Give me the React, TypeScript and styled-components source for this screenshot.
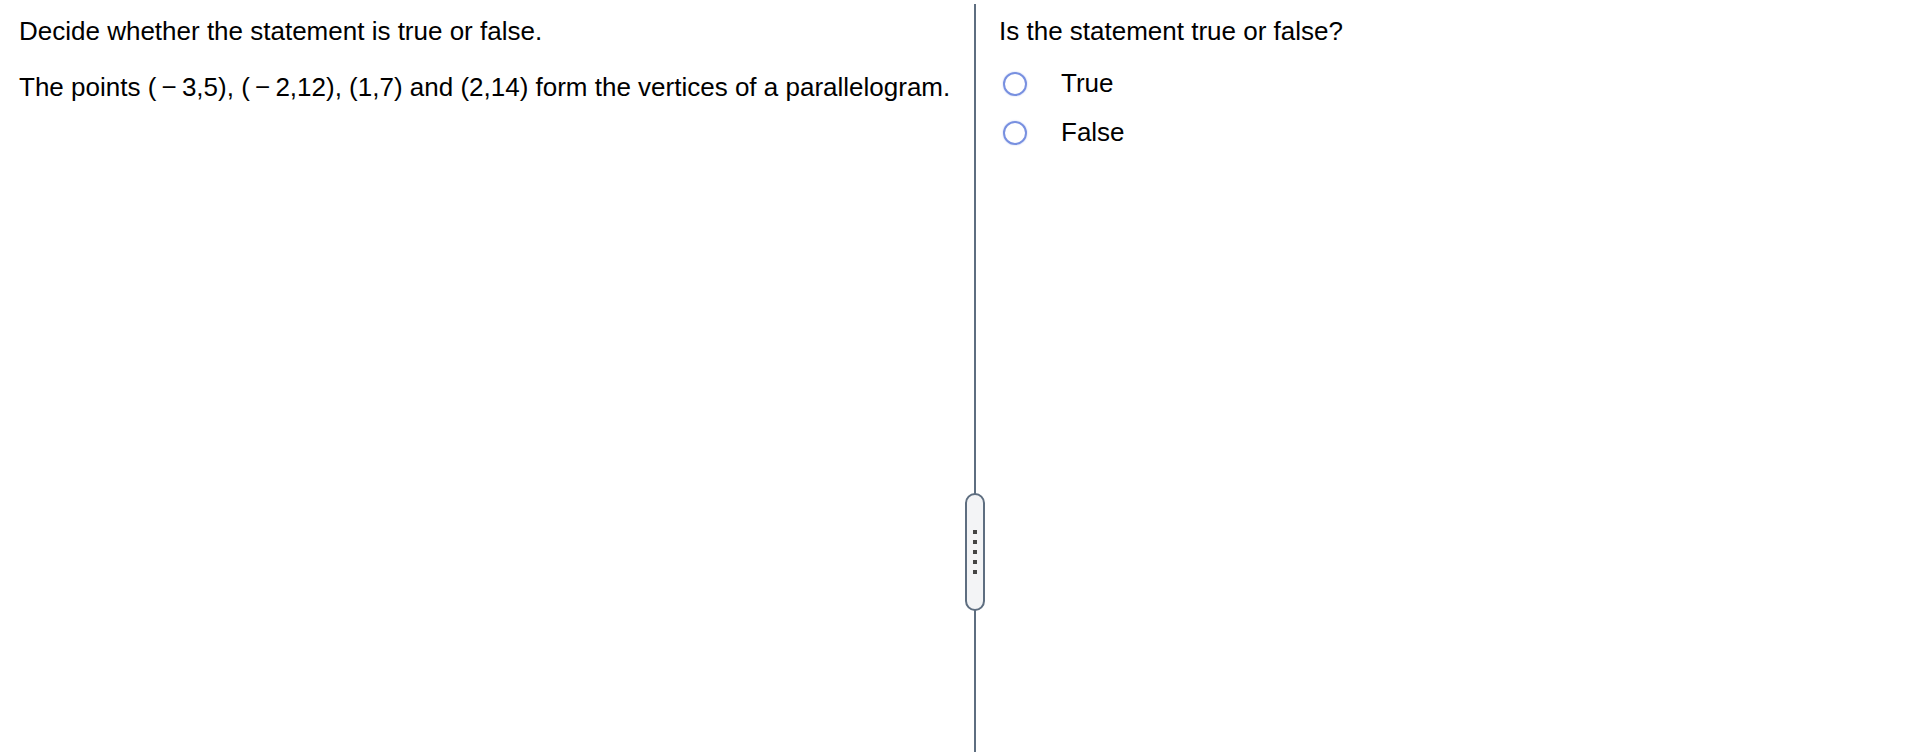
import React from 'react';
import styled, { createGlobalStyle } from 'styled-components';

const GlobalStyle = createGlobalStyle`
  html, body {
    margin: 0;
    padding: 0;
    background: #ffffff;
  }
  body {
    font-family: "Liberation Sans", Arial, sans-serif;
    color: #000000;
  }
`;

const Page = styled.div`
  display: flex;
  height: 100vh;
  overflow: hidden;
`;

const LeftPane = styled.div`
  width: 974px;
  flex: none;
  box-sizing: border-box;
  padding: 16px 0 0 19px;
`;

const Text = styled.p<{ gap?: number }>`
  margin: ${props => (props.gap ? `${props.gap}px` : '0')} 0 0 0;
  font-size: 26px;
  line-height: 30px;
  white-space: nowrap;
`;

const Divider = styled.div`
  position: relative;
  flex: none;
  width: 2px;
  margin-top: 4px;
  background: #5e6e80;
`;

const Handle = styled.div`
  position: absolute;
  left: -9px;
  top: 489px;
  width: 16px;
  height: 114px;
  border: 2px solid #5e6e80;
  border-radius: 10px;
  background: #f3f4f6;
  display: flex;
  flex-direction: column;
  align-items: center;
  justify-content: center;
  gap: 6px;
`;

const Dot = styled.span`
  width: 4px;
  height: 4px;
  background: #444444;
`;

const RightPane = styled.div`
  flex: 1;
  padding: 16px 0 0 23px;
`;

const Options = styled.div`
  margin-top: 13px;
  display: flex;
  flex-direction: column;
`;

const Option = styled.label`
  display: flex;
  align-items: center;
  height: 49px;
  gap: 34px;
  font-size: 26px;
  cursor: pointer;
`;

const Radio = styled.span`
  width: 20px;
  height: 20px;
  margin-left: 4px;
  border-radius: 50%;
  border: 2px solid #7890e0;
  box-shadow: 0 0 1.5px rgba(100, 130, 225, 0.55);
  flex: none;
`;

export default function App() {
  return (
    <>
      <GlobalStyle />
      <Page>
        <LeftPane>
          <Text>Decide whether the statement is true or false.</Text>
          <Text gap={26}>
            The points (&#8201;&#8722;&#8201;3,5), (&#8201;&#8722;&#8201;2,12), (1,7) and (2,14) form the vertices of a parallelogram.
          </Text>
        </LeftPane>
        <Divider>
          <Handle>
            {[0, 1, 2, 3, 4].map(i => (
              <Dot key={i} />
            ))}
          </Handle>
        </Divider>
        <RightPane>
          <Text>Is the statement true or false?</Text>
          <Options>
            <Option>
              <Radio />
              True
            </Option>
            <Option>
              <Radio />
              False
            </Option>
          </Options>
        </RightPane>
      </Page>
    </>
  );
}
